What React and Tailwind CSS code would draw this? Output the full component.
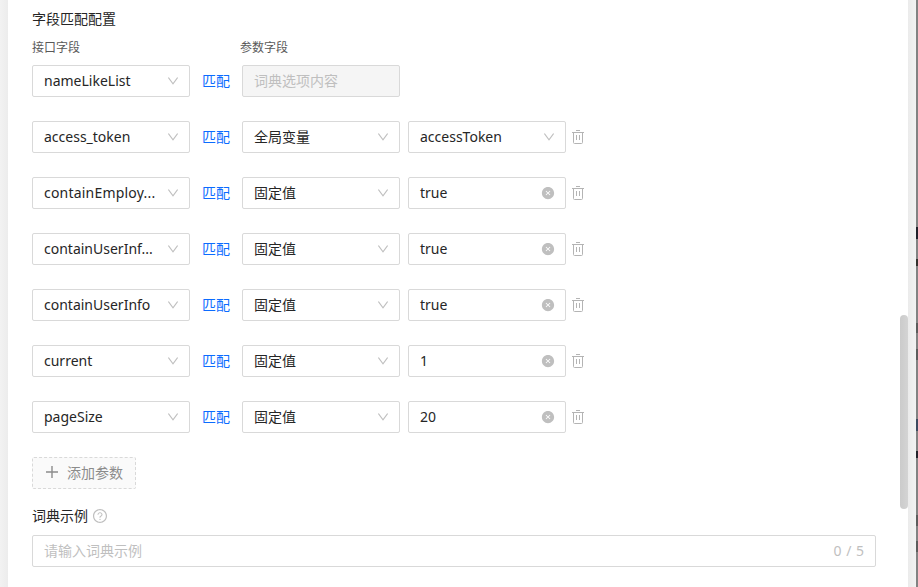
import React from 'react';
import { AiFillCloseCircle, AiOutlineQuestionCircle } from 'react-icons/ai';

const rows = [
  { field: 'nameLikeList' },
  { field: 'access_token', type: '全局变量', value: 'accessToken', select: true },
  { field: 'containEmploy...', type: '固定值', value: 'true', tracking: 'tracking-[0.2px]' },
  { field: 'containUserInf...', type: '固定值', value: 'true' },
  { field: 'containUserInfo', type: '固定值', value: 'true' },
  { field: 'current', type: '固定值', value: '1' },
  { field: 'pageSize', type: '固定值', value: '20' },
];

// page content showing past the right edge of the drawer
const marks = [
  { top: 227, height: 12, color: '#20202a' },
  { top: 259, height: 7, color: '#33312e' },
  { top: 323, height: 10, color: '#5c5c5c' },
  { top: 349, height: 11, color: '#5c5c5c' },
  { top: 419, height: 12, color: '#3d4a60' },
  { top: 451, height: 7, color: '#22222a' },
  { top: 515, height: 11, color: '#5c5c5c' },
  { top: 541, height: 11, color: '#5c5c5c' },
];

const DownIcon = () => (
  <svg width="10" height="8" viewBox="0 0 10 8" fill="none" stroke="#bfbfbf" strokeWidth="1.1" className="shrink-0">
    <path d="M.4.5 5 6.9 9.6.5" />
  </svg>
);

const PlusIcon = () => (
  <svg width="12" height="12" viewBox="0 0 12 12" stroke="#8c8c8c" strokeWidth="1.4" className="mb-0.5 shrink-0">
    <path d="M6 0v12M0 6h12" />
  </svg>
);

const TrashIcon = () => (
  <svg width="12" height="14" viewBox="0 0 12 14" fill="none" stroke="#b4b4b4" className="shrink-0">
    <path d="M0 2.5h12M4 .5h4" />
    <path d="M1.5 2.5v10q0 1 1 1h7q1 0 1-1v-10" />
    <path d="M4.5 5v5M7.5 5v5" />
  </svg>
);

const Box = ({ text, icon, tracking = '', className = 'w-[158px]' }) => (
  <div className={`flex h-8 shrink-0 items-center justify-between rounded-[2px] border border-[#d9d9d9] px-[11px] ${className}`}>
    <span className={`whitespace-nowrap ${tracking}`}>{text}</span>
    {icon === 'down' && <DownIcon />}
    {icon === 'clear' && <AiFillCloseCircle size={14} className="-mr-px shrink-0 text-[#bfbfbf]" />}
  </div>
);

const App = () => {
  return (
    <div className="flex h-[587px] w-[918px] overflow-hidden bg-[#f0f0f0] font-['Noto_Sans','Noto_Sans_CJK_SC',sans-serif] text-sm leading-[22px] text-[#262626]">
      <div className="w-2 shrink-0 bg-linear-to-r from-[#f2f2f2] to-[#ececec]" />

      <main className="flex w-[892px] shrink-0 flex-col bg-white pl-6 pr-6 pt-2">
        <h3 className="h-[22px]">字段匹配配置</h3>
        <div className="mt-2 flex h-5 text-xs leading-5 text-[#595959]">
          <span className="w-52">接口字段</span>
          <span>参数字段</span>
        </div>

        {/* Field mapping rows */}
        <div className="mt-[7px] flex flex-col gap-6">
          {rows.map((row) => (
            <div key={row.field} className="flex items-center">
              <Box text={row.field} icon="down" tracking={row.tracking} />
              <span className="w-[52px] shrink-0 text-center text-[#0b6cff]">匹配</span>
              {row.type ? (
                <>
                  <Box text={row.type} icon="down" />
                  <Box text={row.value} icon={row.select ? 'down' : 'clear'} className="ml-2 mr-1.5 w-[158px]" />
                  <TrashIcon />
                </>
              ) : (
                <Box text="词典选项内容" className="w-[158px] bg-[#f5f5f5] text-[#bfbfbf]" />
              )}
            </div>
          ))}
        </div>

        <button className="mt-6 flex h-8 w-[104px] shrink-0 items-center gap-[9px] rounded-[2px] border border-dashed border-[#d9d9d9] bg-[#fafafa] pl-[13px] text-[#8c8c8c]">
          <PlusIcon />
          添加参数
        </button>

        {/* Dictionary example */}
        <div className="mt-4 flex h-[22px] items-center gap-1">
          <span>词典示例</span>
          <AiOutlineQuestionCircle size={16} className="text-[#bfbfbf]" />
        </div>
        <div className="mt-2 flex h-8 shrink-0 items-center justify-between rounded-[2px] border border-[#d9d9d9] px-[11px] text-[#bfbfbf]">
          <span>请输入词典示例</span>
          <span className="[word-spacing:1px]">0 / 5</span>
        </div>
      </main>

      <div className="w-2 shrink-0 bg-white pt-[315px]">
        <div className="h-[194px] rounded-full bg-linear-to-r from-[#cbcbcb] to-[#d4d4d4]" />
      </div>
      <div className="w-2 shrink-0 bg-linear-to-r from-[#ebebeb] to-[#f2f2f2]" />
      <div className="relative w-0.5 shrink-0 bg-[#828282]">
        {marks.map((m) => (
          <div key={m.top} className="absolute left-0 w-0.5" style={{ top: m.top, height: m.height, background: m.color }} />
        ))}
      </div>
    </div>
  );
};

export default App;
